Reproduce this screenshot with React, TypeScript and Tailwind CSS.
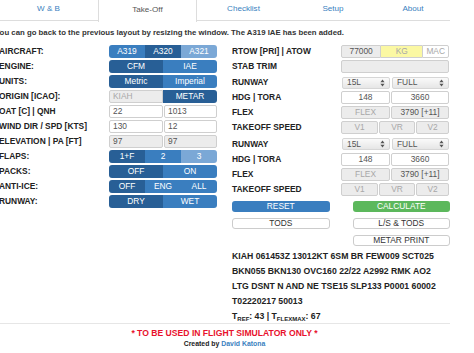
import React from 'react';

type Seg = { t: string; c: 'd' | 'm' | 'l' };

const segBg = { d: 'bg-[#285f96]', m: 'bg-[#3a7ebf]', l: 'bg-[#7ba8d6]' };

function Group({ items }: { items: Seg[] }) {
    return (
        <div className="flex h-[13px] w-[108px] rounded-[3px] overflow-hidden">
            {items.map((s) => (
                <div key={s.t}
                     className={`flex-1 flex items-center justify-center text-white ${segBg[s.c]}`}>{s.t}</div>
            ))}
        </div>
    );
}

function Inp({v, gray, center, muted, className = ''}: {
    v: string; gray?: boolean; center?: boolean; muted?: boolean; className?: string
}) {
    return (
        <div
            className={`h-[13px] border border-[#cfcfcf] rounded-[2px] flex items-center px-[3px] ${gray ? 'bg-[#ececec]' : 'bg-white'} ${center ? 'justify-center' : ''} ${muted ? 'text-[#a8a8a8]' : 'text-[#555]'} ${className}`}>
            {v}
        </div>
    );
}

function Sel({v, className = ''}: { v: string; className?: string }) {
    return (
        <div
            className={`h-[12px] border border-[#d6d6d6] rounded-[2px] flex items-center justify-between pl-[4px] pr-[4px] bg-gradient-to-b from-[#fafafa] to-[#e6e6e6] text-[#555] ${className}`}>
            <span>{v}</span>
            <svg width="5" height="8" viewBox="0 0 5 8">
                <path d="M2.5 0.5 L4.6 3.3 L0.4 3.3 Z" fill="#555"/>
                <path d="M2.5 7.5 L4.6 4.7 L0.4 4.7 Z" fill="#555"/>
            </svg>
        </div>
    );
}

function LRow({label, children}: { label: string; children: React.ReactNode }) {
    return (
        <div className="flex items-center h-[15px]">
            <div className="w-[110px] font-bold text-[#222] whitespace-nowrap">{label}</div>
            {children}
        </div>
    );
}

function RRow({label, children, className = ''}: { label: string; children: React.ReactNode; className?: string }) {
    return (
        <div className={`flex items-center h-[15px] ${className}`}>
            <div className="w-[109px] font-bold text-[#222] whitespace-nowrap">{label}</div>
            <div className="w-[108px] flex">{children}</div>
        </div>
    );
}

function Speeds() {
    return (
        <>
            <Inp v="V1" gray center muted className="w-[37px]"/>
            <Inp v="VR" gray center muted className="w-[36px] ml-[1px]"/>
            <Inp v="V2" gray center muted className="flex-1 ml-[1px]"/>
        </>
    );
}

export default function App() {
    const tabs = [
        {t: 'W & B', w: 'w-[99px]'},
        {t: 'Take-Off', w: 'w-[99px]', active: true},
        {t: 'Checklist', w: 'w-[93px]'},
        {t: 'Setup', w: 'w-[86px]'},
        {t: 'About', w: 'w-[74px]'},
    ];

    return (
        <div className="w-[474px] h-[353px] overflow-hidden bg-white font-['Liberation_Sans',Arial,sans-serif] text-[8.4px] text-[#333]">
            <div className="ml-[-1px] w-[451px]">
                <div className="flex h-[21px] border-b border-[#dddddd]">
                    {tabs.map((tab) => (
                        <div key={tab.t}
                             className={`${tab.w} flex items-center justify-center text-[8.1px] pb-[2px] ${tab.active ? 'border-x border-[#dddddd] bg-white text-[#555] h-[22px]' : 'text-[#3a7fc0]'}`}>
                            {tab.t}
                        </div>
                    ))}
                </div>

                <div className="ml-[-4px] mt-[6px] h-[12px] leading-[12px] font-bold text-[7.8px] text-[#333] whitespace-nowrap">
                    You can go back to the previous layout by resizing the window. The A319 IAE has been added.
                </div>

                <div className="flex mt-[5px]">
                    <div className="w-[218px]">
                        <LRow label="AIRCRAFT:">
                            <Group items={[{t: 'A319', c: 'm'}, {t: 'A320', c: 'd'}, {t: 'A321', c: 'l'}]}/>
                        </LRow>
                        <LRow label="ENGINE:">
                            <Group items={[{t: 'CFM', c: 'd'}, {t: 'IAE', c: 'm'}]}/>
                        </LRow>
                        <LRow label="UNITS:">
                            <Group items={[{t: 'Metric', c: 'd'}, {t: 'Imperial', c: 'm'}]}/>
                        </LRow>
                        <LRow label="ORIGIN [ICAO]:">
                            <div className="flex w-[108px]">
                                <Inp v="KIAH" gray muted className="w-[54px] rounded-r-none"/>
                                <div className="flex-1 h-[13px] bg-[#285f96] rounded-r-[3px] text-white flex items-center justify-center">METAR</div>
                            </div>
                        </LRow>
                        <LRow label="OAT [C] | QNH">
                            <div className="flex w-[108px]">
                                <Inp v="22" className="w-[54px]"/>
                                <Inp v="1013" className="flex-1 ml-[1px]"/>
                            </div>
                        </LRow>
                        <LRow label="WIND DIR / SPD [KTS]">
                            <div className="flex w-[108px]">
                                <Inp v="130" className="w-[54px]"/>
                                <Inp v="12" className="flex-1 ml-[1px]"/>
                            </div>
                        </LRow>
                        <LRow label="ELEVATION | PA [FT]">
                            <div className="flex w-[108px]">
                                <Inp v="97" gray className="w-[54px]"/>
                                <Inp v="97" gray className="flex-1 ml-[1px]"/>
                            </div>
                        </LRow>
                        <LRow label="FLAPS:">
                            <Group items={[{t: '1+F', c: 'd'}, {t: '2', c: 'm'}, {t: '3', c: 'l'}]}/>
                        </LRow>
                        <LRow label="PACKS:">
                            <Group items={[{t: 'OFF', c: 'd'}, {t: 'ON', c: 'm'}]}/>
                        </LRow>
                        <LRow label="ANTI-ICE:">
                            <Group items={[{t: 'OFF', c: 'd'}, {t: 'ENG', c: 'm'}, {t: 'ALL', c: 'm'}]}/>
                        </LRow>
                        <LRow label="RUNWAY:">
                            <Group items={[{t: 'DRY', c: 'd'}, {t: 'WET', c: 'm'}]}/>
                        </LRow>
                    </div>

                    <div className="ml-[15px] w-[218px]">
                        <RRow label="RTOW [PRI] | ATOW">
                            <Inp v="77000" gray center className="w-[41px] rounded-r-none"/>
                            <div className="w-[42px] h-[13px] bg-[#fbf8a3] border-y border-[#cfcfcf] text-[#a8a8a8] flex items-center justify-center">KG</div>
                            <Inp v="MAC" center muted className="flex-1 rounded-l-none"/>
                        </RRow>
                        <RRow label="STAB TRIM">
                            <Inp v="" gray className="w-full"/>
                        </RRow>
                        <RRow label="RUNWAY" className="mt-[1px]">
                            <Sel v="15L" className="w-[48px] ml-[1px]"/>
                            <Sel v="FULL" className="flex-1 ml-[2px]"/>
                        </RRow>
                        <RRow label="HDG | TORA">
                            <Inp v="148" center className="w-[49px]"/>
                            <Inp v="3660" center className="flex-1 ml-[1px]"/>
                        </RRow>
                        <RRow label="FLEX">
                            <Inp v="FLEX" gray center muted className="w-[49px]"/>
                            <Inp v="3790 [+11]" gray center className="flex-1 ml-[1px]"/>
                        </RRow>
                        <RRow label="TAKEOFF SPEED">
                            <Speeds/>
                        </RRow>
                        <RRow label="RUNWAY" className="mt-[1.5px]">
                            <Sel v="15L" className="w-[48px] ml-[1px]"/>
                            <Sel v="FULL" className="flex-1 ml-[2px]"/>
                        </RRow>
                        <RRow label="HDG | TORA">
                            <Inp v="148" center className="w-[49px]"/>
                            <Inp v="3660" center className="flex-1 ml-[1px]"/>
                        </RRow>
                        <RRow label="FLEX">
                            <Inp v="FLEX" gray center muted className="w-[49px]"/>
                            <Inp v="3790 [+11]" gray center className="flex-1 ml-[1px]"/>
                        </RRow>
                        <RRow label="TAKEOFF SPEED">
                            <Speeds/>
                        </RRow>

                        <div className="grid grid-cols-2 gap-x-[23px] gap-y-[5.5px] mt-[4.5px]">
                            <div className="h-[11px] rounded-[3px] bg-[#3a7ebf] text-white flex items-center justify-center">RESET</div>
                            <div className="h-[11px] rounded-[3px] bg-[#5cb85c] text-white flex items-center justify-center">CALCULATE</div>
                            <div className="h-[11.5px] rounded-[3px] border border-[#cccccc] bg-white text-[#333] flex items-center justify-center">TODS</div>
                            <div className="h-[11.5px] rounded-[3px] border border-[#cccccc] bg-white text-[#333] flex items-center justify-center">L/S &amp; TODS</div>
                            <div/>
                            <div className="h-[11.5px] rounded-[3px] border border-[#cccccc] bg-white text-[#333] flex items-center justify-center">METAR PRINT</div>
                        </div>

                        <div className="mt-[2.5px] font-bold text-[8.7px] leading-[15px] text-[#222] whitespace-nowrap">
                            <div>KIAH 061453Z 13012KT 6SM BR FEW009 SCT025</div>
                            <div>BKN055 BKN130 OVC160 22/22 A2992 RMK AO2</div>
                            <div>LTG DSNT N AND NE TSE15 SLP133 P0001 60002</div>
                            <div>T02220217 50013</div>
                            <div className="h-[14px]">
                                T<sub className="text-[6px] align-[-1px]">REF</sub>: 43 | T<sub className="text-[6px] align-[-1px]">FLEXMAX</sub>: 67
                            </div>
                        </div>
                    </div>
                </div>

                <div className="border-t border-[#e6e6e6]"/>
                <div className="mt-[3px] text-center font-bold text-[8.6px] leading-[12px] text-[#e8112d]">
                    * TO BE USED IN FLIGHT SIMULATOR ONLY *
                </div>
                <div className="mt-[0.5px] text-center font-bold text-[6.9px] leading-[10px] text-[#222]">
                    Created by <span className="text-[#3a7fc0]">David Katona</span>
                </div>
            </div>
        </div>
    );
}
